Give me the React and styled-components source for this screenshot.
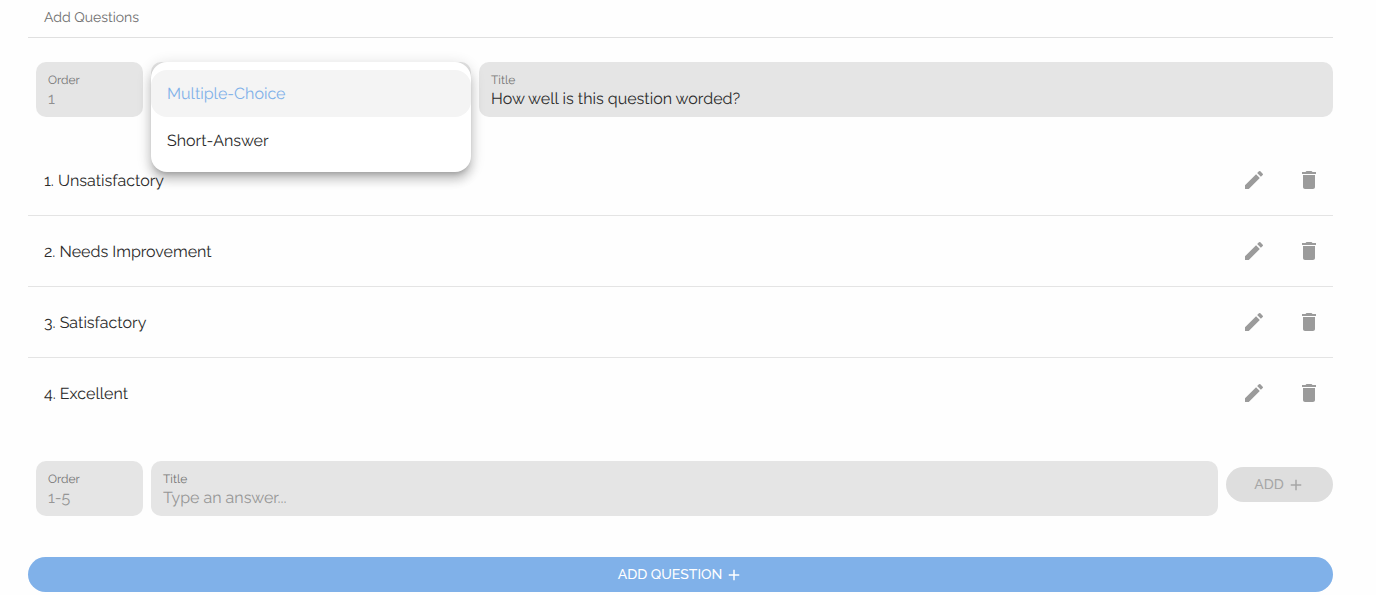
import React, { useState } from 'react';
import styled, { createGlobalStyle } from 'styled-components';
import { MdAdd, MdDelete, MdEdit } from 'react-icons/md';

const GlobalStyle = createGlobalStyle`
* {
	box-sizing: border-box;
}
body {
	margin: 0;
	background-color: #fefefe;
	color: #2a2a2a;
	font-family: Raleway, Lato, sans-serif;
	font-size: 16px;
	text-rendering: geometricPrecision;
}
button, input, select {
	font: inherit;
	color: inherit;
	text-rendering: inherit;
}
`;

const Page = styled.main`
display: flex;
flex-flow: column nowrap;
padding: 0 43px 0 28px;
`;

const Heading = styled.h2`
margin: 0;
padding: 8px 16px 9px;
border-bottom: 1px solid #e0e0e0;
color: #707070;
font-size: 14px;
font-weight: 400;
line-height: 20px;
`;

const FieldRow = styled.div`
display: grid;
grid-template-columns: ${(props) => props.$columns};
gap: 8px;
align-items: start;
padding-left: 8px;
margin-top: ${(props) => props.$top}px;
`;

const FieldBox = styled.div`
display: flex;
flex-flow: column nowrap;
height: 55px;
padding: 10px 12px 8px;
border-radius: 10px;
background-color: #e5e5e5;
`;

const FieldLabel = styled.label`
color: #757575;
font-size: 12px;
line-height: 17px;
`;

const TextInput = styled.input`
width: 100%;
height: 20px;
padding: 0;
border: none;
outline: none;
background: none;
line-height: 20px;
&:disabled {
	color: #8f8f8f;
}
&::placeholder {
	color: #969696;
	opacity: 1;
}
`;

const TypeSelect = styled.select`
width: 100%;
height: 20px;
padding: 0;
border: none;
background: none;
appearance: none;
`;

const SelectWrap = styled.div`
position: relative;
`;

const SelectContent = styled.div`
display: flex;
flex-flow: column nowrap;
visibility: ${(props) => (props.$open ? 'hidden' : 'visible')};
`;

const Menu = styled.div`
position: absolute;
top: 0;
left: 0;
right: 0;
z-index: 1;
padding: 8px 0;
border-radius: 16px;
background-color: White;
box-shadow: 0 5px 5px -3px rgba(0, 0, 0, .2), 0 8px 10px 1px rgba(0, 0, 0, .14), 0 3px 14px 2px rgba(0, 0, 0, .12);
`;

const MenuItem = styled.button`
display: block;
width: 100%;
height: 47px;
padding: 0 16px;
border: none;
border-radius: 16px;
background-color: ${(props) => (props.$selected ? '#f4f4f4' : 'transparent')};
color: ${(props) => (props.$selected ? '#80b1e9' : '#2a2a2a')};
text-align: left;
cursor: pointer;
`;

const AnswerList = styled.ol`
margin: 28px 0 0;
padding: 0;
list-style: none;
`;

const Answer = styled.li`
display: flex;
align-items: center;
gap: 7px;
height: 71px;
padding-left: 16px;
border-bottom: 1px solid #e4e4e4;
&:last-child {
	border-bottom-color: transparent;
}
`;

const AnswerText = styled.span`
flex-grow: 1;
`;

const IconButton = styled.button`
display: flex;
padding: 12px;
border: none;
border-radius: 50%;
background: none;
color: #9b9b9b;
cursor: pointer;
`;

const PillButton = styled.button`
display: flex;
justify-content: center;
align-items: center;
gap: 3px;
width: 100%;
height: 35px;
margin-top: ${(props) => props.$top}px;
padding: 0;
border: none;
border-radius: 18px;
background-color: #80b1e9;
color: White;
font-size: 14px;
font-weight: 500;
cursor: pointer;
&:disabled {
	background-color: #dedede;
	color: #a6a6a6;
	cursor: default;
}
`;

const Field = ({ id, label, ...rest }) => (
	<FieldBox>
		<FieldLabel htmlFor={id}>{label}</FieldLabel>
		<TextInput id={id} {...rest} />
	</FieldBox>
);

const types = ['Multiple-Choice', 'Short-Answer'];
const answers = ['Unsatisfactory', 'Needs Improvement', 'Satisfactory', 'Excellent'];

const TypeField = () => {
	const [type, setType] = useState(types[0]);
	const [open, setOpen] = useState(true);
	const choose = (value) => {
		setType(value);
		setOpen(false);
	};
	return (
		<SelectWrap>
			<FieldBox>
				<SelectContent $open={open}>
					<FieldLabel htmlFor="type">Type</FieldLabel>
					<TypeSelect id="type" value={type} onChange={(e) => choose(e.target.value)}>
						{types.map((t) => <option key={t}>{t}</option>)}
					</TypeSelect>
				</SelectContent>
			</FieldBox>
			{open && (
				<Menu role="listbox" aria-label="Type">
					{types.map((t) => (
						<MenuItem
							key={t}
							type="button"
							role="option"
							aria-selected={t === type}
							$selected={t === type}
							onClick={() => choose(t)}
						>
							{t}
						</MenuItem>
					))}
				</Menu>
			)}
		</SelectWrap>
	);
};

export default function App() {
	return (
		<Page>
			<GlobalStyle />
			<Heading>Add Questions</Heading>
			<FieldRow $columns="107px 320px 1fr" $top={24}>
				<Field id="order" label="Order" defaultValue="1" disabled />
				<TypeField />
				<Field id="title" label="Title" defaultValue="How well is this question worded?" />
			</FieldRow>
			<AnswerList>
				{answers.map((answer, i) => (
					<Answer key={answer}>
						<AnswerText>{i + 1}. {answer}</AnswerText>
						<IconButton type="button" aria-label="Edit"><MdEdit size={24} /></IconButton>
						<IconButton type="button" aria-label="Delete"><MdDelete size={24} /></IconButton>
					</Answer>
				))}
			</AnswerList>
			<FieldRow $columns="107px 1fr 107px" $top={32}>
				<Field id="answer-order" label="Order" placeholder="1-5" />
				<Field id="answer-title" label="Title" placeholder="Type an answer..." />
				<PillButton type="button" disabled $top={6}>ADD <MdAdd size={18} /></PillButton>
			</FieldRow>
			<PillButton type="button" $top={41}>ADD QUESTION <MdAdd size={18} /></PillButton>
		</Page>
	);
}
